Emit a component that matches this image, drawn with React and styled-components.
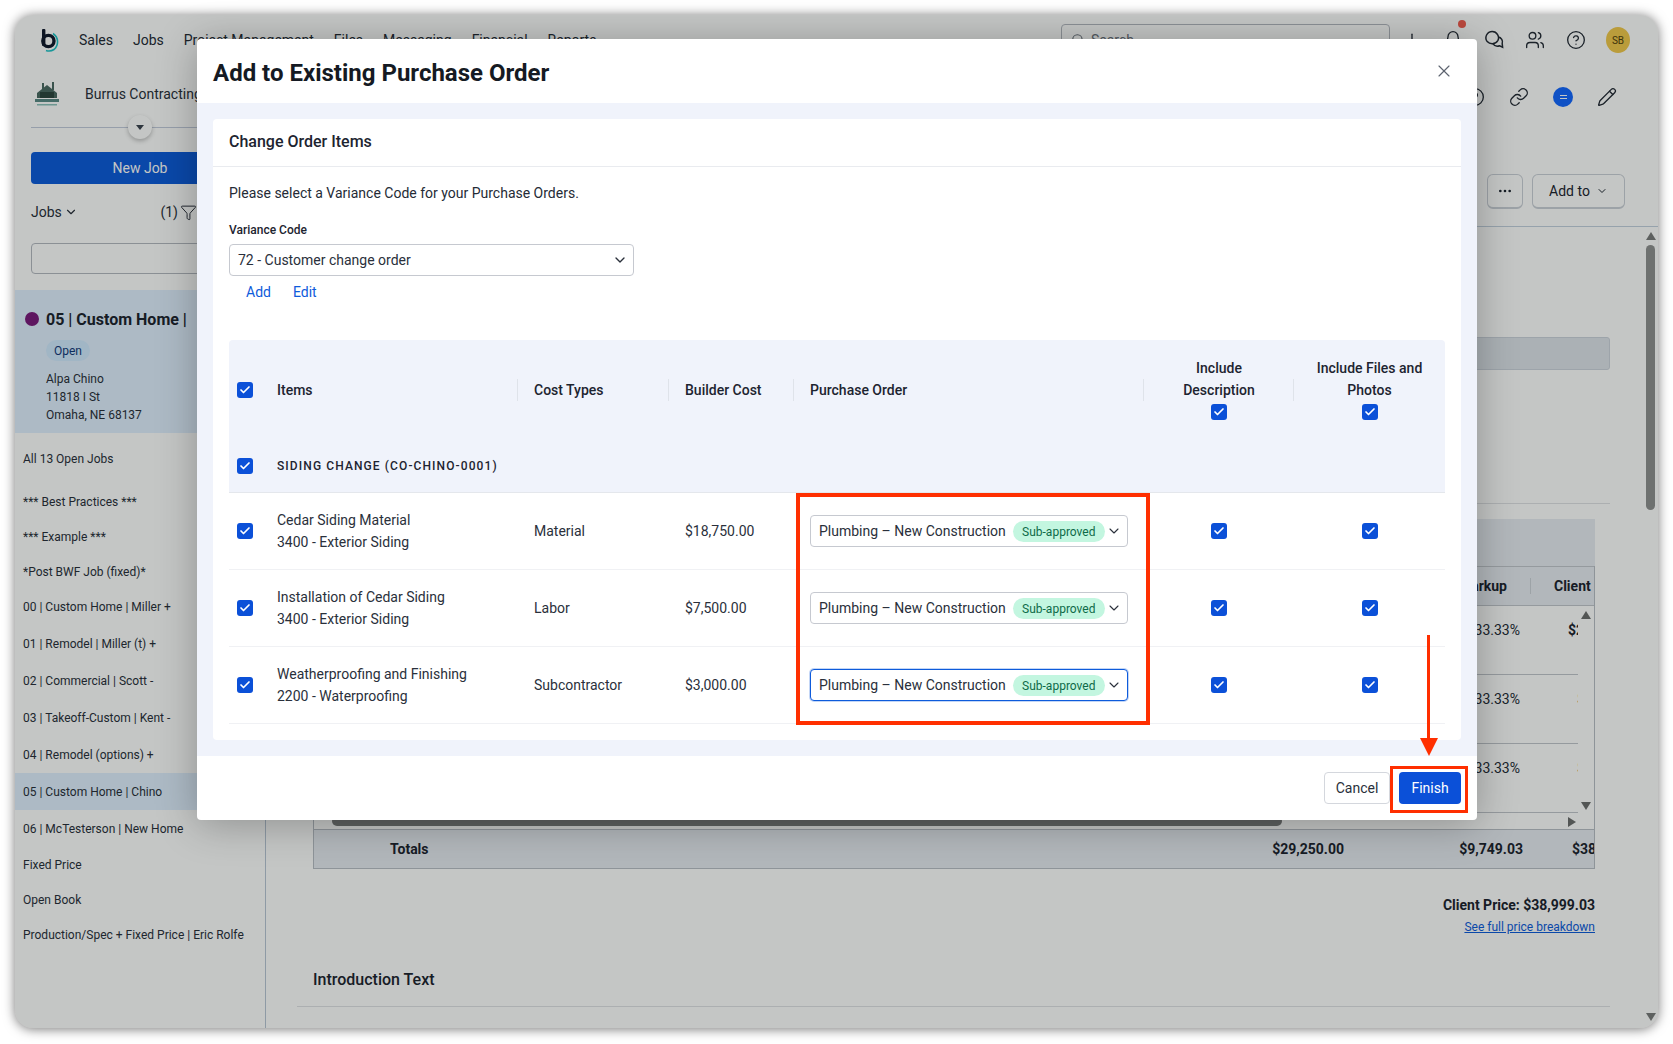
import React from "react";
import styled, { createGlobalStyle } from "styled-components";
import { Plus, Bell, Users, CircleHelp, ChevronDown, Link as LinkIcon, Pencil, Filter, X, Check, Search, Ellipsis } from "lucide-react";

const Global = createGlobalStyle`
  html, body { margin: 0; padding: 0; background: #fff; }
  * { box-sizing: border-box; }
  body { font-family: Roboto, "Noto Sans", sans-serif; color: #1d2430; }
`;

const Page = styled.div`
  position: relative;
  width: 1673px;
  height: 1044px;
  padding: 15px;
  overflow: hidden;
  background: #fff;
`;
const Win = styled.div`
  position: relative;
  width: 1643px;
  height: 1013px;
  display: flex;
  flex-direction: column;
  overflow: hidden;
  border-radius: 18px;
  background: #fff;
  box-shadow: 0 1px 12px rgba(0, 0, 0, 0.55);
`;
const Dim = styled.div`
  position: absolute;
  inset: 0;
  background: rgba(0, 8, 4, 0.23);
`;

/* top nav */
const TopNav = styled.header`
  height: 50px;
  flex: none;
  display: flex;
  align-items: center;
  justify-content: space-between;
  padding: 0 28px 0 25px;
`;
const NavLeft = styled.nav`
  display: flex;
  align-items: center;
  gap: 20px;
  font-size: 14px;
  color: #252b36;
`;
const LogoMark = styled.svg`
  width: 20px;
  height: 24px;
  margin-right: -1px;
`;
const NavRight = styled.div`
  display: flex;
  align-items: center;
  gap: 21px;
  color: #252b36;
`;
const SearchBox = styled.div`
  width: 329px;
  height: 32px;
  margin-right: -9px;
  padding: 0 9px;
  display: flex;
  align-items: center;
  gap: 6px;
  border: 1px solid #b5b9c1;
  border-radius: 4px;
  font-size: 14px;
  color: #6a717c;
`;
const IconSlot = styled.span`
  position: relative;
  width: 20px;
  height: 20px;
  display: block;
`;
const RedDot = styled.span`
  position: absolute;
  top: -10px;
  right: -3px;
  width: 8px;
  height: 8px;
  border-radius: 50%;
  background: #f25b4e;
`;
const Avatar = styled.span`
  width: 24px;
  height: 26px;
  margin-left: -1px;
  border-radius: 50%;
  background: #f2c94c;
  display: flex;
  align-items: center;
  justify-content: center;
  font-size: 10px;
  color: #51400c;
`;

/* body */
const Body = styled.div`
  flex: 1;
  min-height: 0;
  display: flex;
`;
const Sidebar = styled.aside`
  width: 251px;
  flex: none;
  border-right: 1px solid #b9c6d6;
  font-size: 12px;
`;
const Brand = styled.div`
  margin-top: 15px;
  padding-left: 19px;
  height: 28px;
  display: flex;
  align-items: center;
  gap: 25px;
  font-size: 14px;
  white-space: nowrap;
  color: #2a303b;
`;
const BrandLogo = styled.svg`
  width: 26px;
  height: 28px;
  flex: none;
`;
const Divider = styled.div`
  position: relative;
  margin: 19px 16px 0;
  height: 1px;
  background: #c3cbdc;
`;
const Toggle = styled.span`
  position: absolute;
  left: 97px;
  top: -12px;
  width: 24px;
  height: 24px;
  border-radius: 50%;
  background: #fff;
  box-shadow: 0 2px 4px rgba(0, 0, 0, 0.25);
  &::after {
    content: "";
    position: absolute;
    left: 8px;
    top: 10px;
    border: 4px solid transparent;
    border-top: 5px solid #3d4450;
    border-bottom: 0;
  }
`;
const NewJob = styled.div`
  margin: 24px 16px 0;
  height: 32px;
  border-radius: 4px;
  background: #0e5bdb;
  color: #fff;
  display: flex;
  align-items: center;
  justify-content: center;
  font-size: 14px;
`;
const JobsRow = styled.div`
  margin: 16px 0 0 16px;
  width: 166px;
  height: 24px;
  display: flex;
  align-items: center;
  justify-content: space-between;
  font-size: 14px;
  color: #2a303b;
`;
const RowGroup = styled.span`
  display: inline-flex;
  align-items: center;
  gap: 2px;
`;
const SideInput = styled.div`
  margin: 19px 16px 0;
  height: 31px;
  border: 1px solid #b5b9c1;
  border-radius: 4px;
`;
const JobCard = styled.section`
  margin-top: 16px;
  height: 143px;
  padding: 17px 0 0 10px;
  background: #e2f0ff;
`;
const JobTitle = styled.div`
  height: 24px;
  display: flex;
  align-items: center;
  gap: 7px;
  font-size: 16px;
  font-weight: 700;
  white-space: nowrap;
  color: #1d2430;
`;
const JobDot = styled.span`
  width: 14px;
  height: 14px;
  border-radius: 50%;
  background: #7b1a7c;
`;
const OpenBadge = styled.span`
  margin: 9px 0 0 21px;
  width: 44px;
  height: 21px;
  display: flex;
  align-items: center;
  justify-content: center;
  border-radius: 11px;
  background: #d2eaff;
  color: #123a7a;
  font-size: 12px;
`;
const JobAddress = styled.div`
  margin: 9px 0 0 21px;
  font-size: 12px;
  line-height: 18px;
  color: #2a303b;
`;
const JobList = styled.ul`
  list-style: none;
  margin: 8px 0 0;
  padding: 0;
`;
const JobItem = styled.li`
  height: ${(p) => p.$h}px;
  margin-bottom: ${(p) => p.$gap || 0}px;
  padding-left: 8px;
  display: flex;
  align-items: center;
  font-size: 12px;
  white-space: nowrap;
  color: #2a303b;
  background: ${(p) => (p.$active ? "#e2f0ff" : "transparent")};
`;

/* main */
const Main = styled.main`
  flex: 1;
  min-width: 0;
  display: flex;
  flex-direction: column;
`;
const MainHead = styled.div`
  height: 162px;
  flex: none;
  border-bottom: 1px solid #c4d1df;
  padding-top: 22px;
  display: flex;
  flex-direction: column;
  align-items: flex-end;
`;
const HeadIcons = styled.div`
  display: flex;
  gap: 24px;
  padding-right: 41px;
  color: #252b36;
`;
const BlueChat = styled.span`
  width: 20px;
  height: 20px;
  border-radius: 50%;
  background: #1467ff;
  display: flex;
  flex-direction: column;
  align-items: center;
  justify-content: center;
  gap: 2px;
  &::before,
  &::after {
    content: "";
    width: 7px;
    height: 1px;
    background: #fff;
  }
`;
const HeadButtons = styled.div`
  margin-top: 67px;
  padding-right: 33px;
  display: flex;
  gap: 9px;
`;
const GhostBtn = styled.div`
  height: 35px;
  width: ${(p) => p.$w}px;
  border: 1px solid #ccd0d8;
  border-bottom-width: 2px;
  border-radius: 6px;
  display: flex;
  align-items: center;
  justify-content: center;
  gap: 6px;
  font-size: 14px;
  color: #1d2430;
`;
const MainScroll = styled.div`
  flex: 1;
  min-height: 0;
  display: flex;
`;
const Content = styled.div`
  flex: 1;
  min-width: 0;
  overflow: hidden;
`;
const GreyBar = styled.div`
  margin: 110px 35px 0 47px;
  height: 33px;
  border: 1px solid #cdd3dc;
  border-radius: 3px;
  background: #dfe4eb;
`;
const ThinLine = styled.div`
  margin: 133px 35px 0 31px;
  height: 1px;
  background: #e0e2e6;
`;
const PanelTop = styled.div`
  margin: 15px 50px 0 47px;
  height: 47px;
  background: #e8ecf2;
`;
const PriceTable = styled.div`
  margin: 0 50px 0 47px;
  border-left: 1px solid #b9bec6;
  border-right: 1px solid #b9bec6;
  height: 263px;
  overflow: hidden;
`;
const PriceHead = styled.div`
  height: 40px;
  border-top: 1px solid #c2c6cd;
  border-bottom: 1px solid #c2c6cd;
  background: #e8ecf2;
  display: flex;
  align-items: center;
  justify-content: flex-end;
  font-size: 14px;
  font-weight: 700;
  white-space: nowrap;
  color: #1d2430;
`;
const HeadCellRight = styled.span`
  width: 86px;
  padding-right: 23px;
  text-align: right;
  border-right: 1px solid #cdd2d9;
`;
const HeadCellClip = styled.span`
  width: 63px;
  padding-left: 23px;
  overflow: hidden;
`;
const PriceBody = styled.div`
  position: relative;
  height: 207px;
  padding-right: 16px;
`;
const PriceRow = styled.div`
  height: 69px;
  padding-top: 12px;
  border-bottom: 1px solid #c2c6cd;
  display: grid;
  grid-template-columns: 1206px 1fr;
  font-size: 14px;
  line-height: 24px;
  white-space: nowrap;
  overflow: hidden;
`;
const PriceCell = styled.span`
  text-align: right;
  color: #252b36;
`;
const PriceClip = styled.span`
  padding-left: ${(p) => p.$pad}px;
  font-weight: ${(p) => (p.$bold ? 700 : 400)};
  overflow: hidden;
`;
const MiniArrow = styled.span`
  position: absolute;
  width: 0;
  height: 0;
  right: ${(p) => p.$r}px;
  ${(p) => (p.$down ? "bottom: 3px; border-top: 8px solid #6d6e6e;" : "top: 5px; border-bottom: 8px solid #6d6e6e;")}
  border-left: 5px solid transparent;
  border-right: 5px solid transparent;
`;
const HScroll = styled.div`
  position: relative;
  height: 16px;
  padding: 3px 0 0 18px;
`;
const HThumb = styled.div`
  width: 950px;
  height: 10px;
  border-radius: 5px;
  background: #7b7c7c;
`;
const HArrow = styled.span`
  position: absolute;
  right: 18px;
  top: 4px;
  width: 0;
  height: 0;
  border-left: 8px solid #6d6e6e;
  border-top: 5px solid transparent;
  border-bottom: 5px solid transparent;
`;
const Totals = styled.div`
  margin: 0 50px 0 47px;
  height: 40px;
  border: 1px solid #b9bec6;
  background: #e8ecf2;
  display: grid;
  grid-template-columns: 200px 830px 179px 1fr;
  align-items: center;
  font-size: 14px;
  font-weight: 700;
  white-space: nowrap;
  color: #1d2430;
`;
const TotalLabel = styled.span`
  padding-left: 76px;
`;
const TotalValue = styled.span`
  text-align: right;
`;
const TotalClip = styled.span`
  padding-left: 49px;
  overflow: hidden;
`;
const PriceSummary = styled.div`
  margin: 25px 50px 0 47px;
  text-align: right;
`;
const ClientPrice = styled.div`
  font-size: 14px;
  line-height: 22px;
  font-weight: 700;
  color: #1d2430;
`;
const BreakdownLink = styled.a`
  display: block;
  font-size: 12px;
  line-height: 22px;
  color: #0e5bdb;
  text-decoration: underline;
`;
const IntroTitle = styled.h3`
  margin: 30px 0 0 47px;
  font-size: 16px;
  line-height: 24px;
  font-weight: 500;
  color: #1d2430;
`;
const IntroLine = styled.div`
  margin: 14px 35px 0 31px;
  height: 1px;
  background: #e0e2e6;
`;
const VScroll = styled.div`
  position: relative;
  width: 13px;
  flex: none;
`;
const VThumb = styled.div`
  position: absolute;
  top: 18px;
  left: 1px;
  width: 9px;
  height: 265px;
  border-radius: 5px;
  background: #909191;
`;
const VArrow = styled.span`
  position: absolute;
  left: 1px;
  width: 0;
  height: 0;
  ${(p) => (p.$down ? "bottom: 7px; border-top: 8px solid #7a7b7b;" : "top: 5px; border-bottom: 8px solid #7a7b7b;")}
  border-left: 5px solid transparent;
  border-right: 5px solid transparent;
`;

/* modal */
const Modal = styled.div`
  position: absolute;
  left: 197px;
  top: 39px;
  width: 1280px;
  height: 781px;
  display: flex;
  flex-direction: column;
  border-radius: 4px;
  background: #fff;
  box-shadow: 0 4px 40px rgba(0, 0, 0, 0.28);
`;
const ModalHead = styled.div`
  height: 64px;
  flex: none;
  padding: 0 23px 0 16px;
  display: flex;
  align-items: center;
  justify-content: space-between;
`;
const ModalTitle = styled.h2`
  margin: 3px 0 0;
  font-size: 24px;
  font-weight: 700;
  color: #151a23;
`;
const CloseIcon = styled(X)`
  color: #5d6470;
`;
const ModalBody = styled.div`
  flex: 1;
  padding: 16px;
  background: #f0f3fb;
`;
const Card = styled.div`
  height: 621px;
  border-radius: 4px;
  background: #fff;
`;
const CardHead = styled.div`
  height: 48px;
  padding: 0 16px 3px;
  border-bottom: 1px solid #e9ebef;
  display: flex;
  align-items: center;
  font-size: 16px;
  font-weight: 500;
  color: #1d2430;
`;
const CardContent = styled.div`
  padding: 16px 16px 0;
`;
const Intro = styled.div`
  font-size: 14px;
  line-height: 20px;
  color: #252b36;
`;
const Label = styled.div`
  margin-top: 17px;
  font-size: 12px;
  line-height: 20px;
  font-weight: 500;
  color: #1d2430;
`;
const SelectBox = styled.div`
  margin-top: ${(p) => p.$mt || 0}px;
  width: ${(p) => p.$w}px;
  height: 32px;
  padding: 0 5px 0 8px;
  display: flex;
  align-items: center;
  justify-content: space-between;
  border: 1px solid ${(p) => (p.$focus ? "#0e5bdb" : "#c6c9d0")};
  border-radius: 4px;
  background: #fff;
  font-size: 14px;
  white-space: nowrap;
  color: #2a303b;
  box-shadow: ${(p) => (p.$focus ? "0 0 0 1px rgba(14,91,219,.25)" : "none")};
  svg {
    flex: none;
  }
`;
const SelectValue = styled.span`
  display: flex;
  align-items: center;
  gap: 7px;
`;
const SubBadge = styled.span`
  width: 92px;
  height: 21px;
  padding-top: 2px;
  display: flex;
  align-items: center;
  justify-content: center;
  border-radius: 11px;
  background: #c3f6e0;
  color: #0e6b49;
  font-size: 12px;
`;
const Links = styled.div`
  margin-top: 6px;
  padding-left: 17px;
  display: flex;
  gap: 22px;
  font-size: 14px;
  line-height: 20px;
  color: #0e5bdb;
`;
const ItemsTable = styled.div`
  margin-top: 38px;
`;
const columns = "48px 241px 151px 125px 350px 150px 151px";
const HeadRow = styled.div`
  height: 99px;
  display: grid;
  grid-template-columns: ${columns};
  align-items: center;
  border-radius: 4px 4px 0 0;
  background: #f0f3fb;
  font-size: 14px;
  line-height: 22px;
  font-weight: 500;
  color: #1d2430;
`;
const HeadCell = styled.div`
  position: relative;
  padding-left: ${(p) => (p.$first ? 0 : 16)}px;
  ${(p) =>
    p.$sep &&
    `&::after {
      content: "";
      position: absolute;
      right: 0;
      top: 50%;
      height: 22px;
      margin-top: -11px;
      width: 1px;
      background: #dfe3ea;
    }`}
`;
const CenterHead = styled(HeadCell)`
  padding: 0 8px;
  display: flex;
  flex-direction: column;
  align-items: center;
  text-align: center;
`;
const BoxCell = styled.div`
  display: flex;
  align-items: center;
  justify-content: ${(p) => (p.$left ? "flex-start" : "center")};
  padding-left: ${(p) => (p.$left ? 8 : 0)}px;
  height: ${(p) => p.$h || "auto"};
`;
const SectionRow = styled.div`
  height: 54px;
  display: flex;
  align-items: center;
  background: #f0f3fb;
  border-bottom: 1px solid #e4e7ec;
`;
const SectionBox = styled.div`
  width: 48px;
  padding-left: 8px;
  display: flex;
`;
const SectionName = styled.span`
  font-size: 12px;
  font-weight: 500;
  letter-spacing: 1.1px;
  color: #1d2430;
`;
const ItemRow = styled.div`
  height: 77px;
  display: grid;
  grid-template-columns: ${columns};
  align-items: center;
  border-bottom: 1px solid #f0f1f4;
  font-size: 14px;
  line-height: 22px;
  color: #2a303b;
`;
const ItemCell = styled.div`
  padding-left: ${(p) => (p.$first ? 0 : 16)}px;
`;
const Box = styled.span`
  width: 16px;
  height: 16px;
  border-radius: 3px;
  background: #0b50d8;
  display: flex;
  align-items: center;
  justify-content: center;
  color: #fff;
`;
const ModalFoot = styled.div`
  height: 64px;
  flex: none;
  padding: 0 16px;
  display: flex;
  align-items: center;
  justify-content: flex-end;
  gap: 9px;
`;
const CancelBtn = styled.div`
  width: 66px;
  height: 32px;
  border: 1px solid #d4d7dd;
  border-radius: 4px;
  display: flex;
  align-items: center;
  justify-content: center;
  font-size: 14px;
  color: #2a303b;
`;
const FinishBtn = styled.div`
  width: 62px;
  height: 32px;
  border-radius: 4px;
  background: #0b50d8;
  display: flex;
  align-items: center;
  justify-content: center;
  font-size: 14px;
  color: #fff;
`;

/* annotations */
const Callout = styled.div`
  position: absolute;
  left: ${(p) => p.$x}px;
  top: ${(p) => p.$y}px;
  width: ${(p) => p.$w}px;
  height: ${(p) => p.$h}px;
  border: ${(p) => p.$b}px solid #ff2f00;
  pointer-events: none;
`;
const ArrowMark = styled.svg`
  position: absolute;
  left: 1418px;
  top: 634px;
  width: 22px;
  height: 124px;
`;

const Tick = () => (
  <Box>
    <Check size={12} strokeWidth={3.4} />
  </Box>
);

const items = [
  ["Cedar Siding Material", "3400 - Exterior Siding", "Material", "$18,750.00", false],
  ["Installation of Cedar Siding", "3400 - Exterior Siding", "Labor", "$7,500.00", false],
  ["Weatherproofing and Finishing", "2200 - Waterproofing", "Subcontractor", "$3,000.00", true],
];

const jobs = [
  ["*** Best Practices ***", 35],
  ["*** Example ***", 35],
  ["*Post BWF Job (fixed)*", 35],
  ["00 | Custom Home | Miller +", 36],
  ["01 | Remodel | Miller (t) +", 37],
  ["02 | Commercial | Scott -", 37],
  ["03 | Takeoff-Custom | Kent -", 37],
  ["04 | Remodel (options) +", 37],
  ["05 | Custom Home | Chino", 37, true],
  ["06 | McTesterson | New Home", 37],
  ["Fixed Price", 35],
  ["Open Book", 35],
  ["Production/Spec + Fixed Price | Eric Rolfe", 35],
];

export default function App() {
  return (
    <Page>
      <Global />
      <Win>
        <TopNav>
          <NavLeft>
            <LogoMark viewBox="0 0 20 24">
              <rect x="2" y="1" width="3.4" height="17" rx="1" fill="#10182c" />
              <circle cx="8.4" cy="13" r="5.6" fill="none" stroke="#10182c" strokeWidth="3.4" />
              <path d="M13 5.5a10 10 0 0 1 1 16 9 9 0 0 1-8 1" fill="none" stroke="#21c3c8" strokeWidth="1.6" />
            </LogoMark>
            <span>Sales</span>
            <span>Jobs</span>
            <span>Project Management</span>
            <span>Files</span>
            <span>Messaging</span>
            <span>Financial</span>
            <span>Reports</span>
          </NavLeft>
          <NavRight>
            <SearchBox>
              <Search size={14} />
              Search
            </SearchBox>
            <Plus size={20} strokeWidth={1.6} />
            <IconSlot>
              <Bell size={20} strokeWidth={1.6} />
              <RedDot />
            </IconSlot>
            <svg width="20" height="20" viewBox="0 0 20 20" fill="none" stroke="currentColor" strokeWidth="1.5">
              <path d="M8.2 1.5a6.3 6.3 0 0 1 5.6 9.2 6.3 6.3 0 0 1-5.6 3.1 6.6 6.6 0 0 1-5-2.2A6.3 6.3 0 0 1 8.2 1.5Z" />
              <path d="M14.2 7a5 5 0 0 1 4 6.6l.4 3.6-3-1.4a5.6 5.6 0 0 1-6.6-1.9" />
            </svg>
            <Users size={20} strokeWidth={1.6} />
            <CircleHelp size={20} strokeWidth={1.6} />
            <Avatar>SB</Avatar>
          </NavRight>
        </TopNav>
        <Body>
          <Sidebar>
            <Brand>
              <BrandLogo viewBox="0 0 26 28">
                <path d="M3 13 13 5l10 8v5H3Z" fill="#4c6a63" />
                <rect x="6" y="12" width="14" height="6" fill="#2e4740" />
                <rect x="8" y="3" width="2" height="6" fill="#4c6a63" />
                <rect x="18" y="2" width="2" height="8" fill="#4c6a63" />
                <rect x="1" y="19" width="24" height="3" fill="#5b8a86" />
                <rect x="3" y="24" width="20" height="1.5" fill="#8ec2bc" />
              </BrandLogo>
              Burrus Contracting
            </Brand>
            <Divider>
              <Toggle />
            </Divider>
            <NewJob>New Job</NewJob>
            <JobsRow>
              <RowGroup>
                Jobs
                <ChevronDown size={14} />
              </RowGroup>
              <RowGroup>
                (1)
                <Filter size={17} strokeWidth={1.4} />
              </RowGroup>
            </JobsRow>
            <SideInput />
            <JobCard>
              <JobTitle>
                <JobDot />
                05 | Custom Home |
              </JobTitle>
              <OpenBadge>Open</OpenBadge>
              <JobAddress>
                Alpa Chino
                <br />
                11818 I St
                <br />
                Omaha, NE 68137
              </JobAddress>
            </JobCard>
            <JobList>
              <JobItem $h={35} $gap={8}>
                All 13 Open Jobs
              </JobItem>
              {jobs.map(([name, h, active]) => (
                <JobItem key={name} $h={h} $active={active}>
                  {name}
                </JobItem>
              ))}
            </JobList>
          </Sidebar>
          <Main>
            <MainHead>
              <HeadIcons>
                <CircleHelp size={20} strokeWidth={1.6} />
                <LinkIcon size={20} strokeWidth={1.6} />
                <BlueChat />
                <Pencil size={20} strokeWidth={1.6} />
              </HeadIcons>
              <HeadButtons>
                <GhostBtn $w={36}>
                  <Ellipsis size={16} />
                </GhostBtn>
                <GhostBtn $w={93}>
                  Add to
                  <ChevronDown size={12} />
                </GhostBtn>
              </HeadButtons>
            </MainHead>
            <MainScroll>
              <Content>
                <GreyBar />
                <ThinLine />
                <PanelTop />
                <PriceTable>
                  <PriceHead>
                    <HeadCellRight>Markup</HeadCellRight>
                    <HeadCellClip>Client Price</HeadCellClip>
                  </PriceHead>
                  <PriceBody>
                    <MiniArrow $r={3} />
                    <MiniArrow $r={3} $down />
                    <PriceRow>
                      <PriceCell>33.33%</PriceCell>
                      <PriceClip $pad={48} $bold>
                        $25,000.00
                      </PriceClip>
                    </PriceRow>
                    <PriceRow>
                      <PriceCell>33.33%</PriceCell>
                      <PriceClip $pad={57}>$10,000.00</PriceClip>
                    </PriceRow>
                    <PriceRow>
                      <PriceCell>33.33%</PriceCell>
                      <PriceClip $pad={57}>$3,999.03</PriceClip>
                    </PriceRow>
                  </PriceBody>
                  <HScroll>
                    <HThumb />
                    <HArrow />
                  </HScroll>
                </PriceTable>
                <Totals>
                  <TotalLabel>Totals</TotalLabel>
                  <TotalValue>$29,250.00</TotalValue>
                  <TotalValue>$9,749.03</TotalValue>
                  <TotalClip>$38,999.03</TotalClip>
                </Totals>
                <PriceSummary>
                  <ClientPrice>Client Price: $38,999.03</ClientPrice>
                  <BreakdownLink>See full price breakdown</BreakdownLink>
                </PriceSummary>
                <IntroTitle>Introduction Text</IntroTitle>
                <IntroLine />
              </Content>
              <VScroll>
                <VArrow />
                <VThumb />
                <VArrow $down />
              </VScroll>
            </MainScroll>
          </Main>
        </Body>
        <Dim />
      </Win>

      <Modal>
        <ModalHead>
          <ModalTitle>Add to Existing Purchase Order</ModalTitle>
          <CloseIcon size={20} strokeWidth={1.4} />
        </ModalHead>
        <ModalBody>
          <Card>
            <CardHead>Change Order Items</CardHead>
            <CardContent>
              <Intro>Please select a Variance Code for your Purchase Orders.</Intro>
              <Label>Variance Code</Label>
              <SelectBox $w={405} $mt={4}>
                72 - Customer change order
                <ChevronDown size={16} />
              </SelectBox>
              <Links>
                <span>Add</span>
                <span>Edit</span>
              </Links>
              <ItemsTable>
                <HeadRow>
                  <BoxCell $left>
                    <Tick />
                  </BoxCell>
                  <HeadCell $first $sep>
                    Items
                  </HeadCell>
                  <HeadCell $sep>Cost Types</HeadCell>
                  <HeadCell $sep>Builder Cost</HeadCell>
                  <HeadCell $sep>Purchase Order</HeadCell>
                  <CenterHead $sep>
                    <span>Include</span>
                    <span>Description</span>
                    <BoxCell $h="22px">
                      <Tick />
                    </BoxCell>
                  </CenterHead>
                  <CenterHead>
                    <span>Include Files and</span>
                    <span>Photos</span>
                    <BoxCell $h="22px">
                      <Tick />
                    </BoxCell>
                  </CenterHead>
                </HeadRow>
                <SectionRow>
                  <SectionBox>
                    <Tick />
                  </SectionBox>
                  <SectionName>SIDING CHANGE (CO-CHINO-0001)</SectionName>
                </SectionRow>
                {items.map(([name, code, type, cost, focus]) => (
                  <ItemRow key={name}>
                    <BoxCell $left>
                      <Tick />
                    </BoxCell>
                    <ItemCell $first>
                      {name}
                      <br />
                      {code}
                    </ItemCell>
                    <ItemCell>{type}</ItemCell>
                    <ItemCell>{cost}</ItemCell>
                    <ItemCell>
                      <SelectBox $w={318} $focus={focus}>
                        <SelectValue>
                          Plumbing – New Construction
                          <SubBadge>Sub-approved</SubBadge>
                        </SelectValue>
                        <ChevronDown size={16} strokeWidth={1.6} />
                      </SelectBox>
                    </ItemCell>
                    <BoxCell>
                      <Tick />
                    </BoxCell>
                    <BoxCell>
                      <Tick />
                    </BoxCell>
                  </ItemRow>
                ))}
              </ItemsTable>
            </CardContent>
          </Card>
        </ModalBody>
        <ModalFoot>
          <CancelBtn>Cancel</CancelBtn>
          <FinishBtn>Finish</FinishBtn>
        </ModalFoot>
      </Modal>

      <Callout $x={796} $y={493} $w={354} $h={232} $b={4} />
      <Callout $x={1390} $y={766} $w={78} $h={47} $b={3} />
      <ArrowMark viewBox="0 0 22 124">
        <rect x="9" y="1" width="3" height="106" fill="#ff2f00" />
        <path d="M2 104h18l-9 18Z" fill="#ff2f00" />
      </ArrowMark>
    </Page>
  );
}
